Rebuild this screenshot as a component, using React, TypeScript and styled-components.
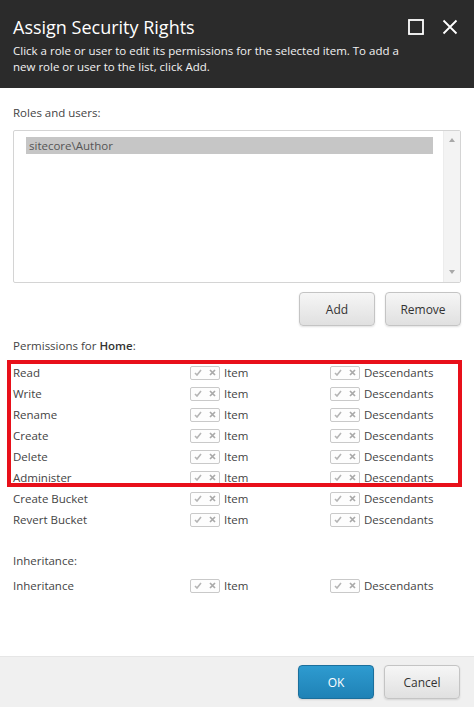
import React from 'react';
import styled, { createGlobalStyle } from 'styled-components';

const GlobalStyle = createGlobalStyle`
  html, body {
    margin: 0;
    padding: 0;
    background: #fff;
  }
  body {
    font-family: "Open Sans", "Noto Sans", sans-serif;
    color: #333;
  }
`;

const Dialog = styled.div`
  display: flex;
  flex-direction: column;
  width: 474px;
  height: 707px;
  overflow: hidden;
`;

const Header = styled.header`
  background: #2b2b2b;
  color: #fff;
  padding: 14px 13px;
  height: 88px;
  box-sizing: border-box;
`;

const TitleRow = styled.div`
  display: flex;
  align-items: center;
  justify-content: space-between;
`;

const Title = styled.h1`
  margin: 0;
  font-size: 18px;
  font-weight: 400;
  line-height: 26px;
`;

const WindowButtons = styled.div`
  display: flex;
  gap: 18px;
  padding-right: 3px;
`;

const Description = styled.p`
  margin: 3px 0 0;
  max-width: 410px;
  font-size: 11.5px;
  line-height: 16px;
  color: #f2f2f2;
`;

const Body = styled.main`
  flex: 1;
  padding: 16px 13px 0;
`;

const SectionLabel = styled.div<{ $top?: number; $gap?: number }>`
  font-size: 11.5px;
  line-height: 18px;
  color: #444;
  margin-top: ${({ $top }) => $top ?? 0}px;
  margin-bottom: ${({ $gap }) => $gap ?? 8}px;
  b {
    font-weight: 600;
    color: #333;
  }
`;

const ListBox = styled.div`
  display: flex;
  height: 153px;
  border: 1px solid #d4d4d4;
  border-radius: 2px;
  box-sizing: border-box;
`;

const ListItems = styled.div`
  flex: 1;
  padding: 6px 10px 0 12px;
`;

const ListItem = styled.div<{ $selected?: boolean }>`
  background: ${({ $selected }) => ($selected ? '#c6c6c6' : 'transparent')};
  font-size: 11.5px;
  line-height: 17px;
  padding: 0 3px;
  color: #555;
`;

const Scrollbar = styled.div`
  width: 17px;
  background: #f3f3f3;
  border-left: 1px solid #ececec;
  display: flex;
  flex-direction: column;
  justify-content: space-between;
  align-items: center;
  padding: 7px 0 8px;
  box-sizing: border-box;
`;

const Arrow = styled.div<{ $down?: boolean }>`
  width: 0;
  height: 0;
  border-left: 3px solid transparent;
  border-right: 3px solid transparent;
  ${({ $down }) =>
    $down ? 'border-top: 4px solid #a8a8a8;' : 'border-bottom: 4px solid #a8a8a8;'}
`;

const ButtonRow = styled.div`
  display: flex;
  justify-content: flex-end;
  gap: 10px;
  margin-top: 9px;
`;

const Button = styled.button<{ $primary?: boolean }>`
  width: 76px;
  height: 34px;
  border-radius: 4px;
  font-family: inherit;
  font-size: 12px;
  cursor: pointer;
  border: 1px solid ${({ $primary }) => ($primary ? '#1b6f9c' : '#c4c4c4')};
  background: ${({ $primary }) =>
    $primary
      ? 'linear-gradient(#2e9bd0, #1f82b6)'
      : 'linear-gradient(#f6f6f6, #e0e0e0)'};
  color: ${({ $primary }) => ($primary ? '#fff' : '#333')};
  box-shadow: 0 1px 2px rgba(0, 0, 0, 0.12);
`;

const PermissionList = styled.div`
  position: relative;
`;

const Highlight = styled.div<{ $rows: number }>`
  position: absolute;
  top: -2px;
  left: -6px;
  right: -1px;
  height: ${({ $rows }) => $rows * 21 + 1}px;
  border: 4px solid #e8101a;
  box-sizing: border-box;
  pointer-events: none;
`;

const Row = styled.div`
  display: grid;
  grid-template-columns: 177px 140px 1fr;
  align-items: center;
  height: 21px;
  font-size: 11.5px;
  color: #444;
`;

const Cell = styled.div`
  display: flex;
  align-items: center;
  gap: 4px;
`;

const ToggleBox = styled.span`
  display: inline-flex;
  align-items: center;
  justify-content: space-around;
  width: 30px;
  height: 14px;
  border: 1px solid #c9c9c9;
  border-radius: 2px;
  box-sizing: border-box;
  background: #fdfdfd;
`;

const Footer = styled.footer`
  background: #f0f0f0;
  border-top: 1px solid #e6e6e6;
  height: 51px;
  box-sizing: border-box;
  display: flex;
  justify-content: flex-end;
  align-items: center;
  gap: 10px;
  padding: 0 14px 0 0;
`;

const Toggle = () => (
  <ToggleBox>
    <svg width="8" height="7" viewBox="0 0 8 7">
      <path d="M1 4 L3 6 L7 1" stroke="#b5b5b5" strokeWidth="1.6" fill="none" />
    </svg>
    <svg width="7" height="7" viewBox="0 0 7 7">
      <path d="M1 1 L6 6 M6 1 L1 6" stroke="#a9a9a9" strokeWidth="1.7" />
    </svg>
  </ToggleBox>
);

const PermissionRow = ({ name }: { name: string }) => (
  <Row>
    <span>{name}</span>
    <Cell>
      <Toggle />
      Item
    </Cell>
    <Cell>
      <Toggle />
      Descendants
    </Cell>
  </Row>
);

const highlighted = ['Read', 'Write', 'Rename', 'Create', 'Delete', 'Administer'];
const others = ['Create Bucket', 'Revert Bucket'];

const App: React.FC = () => (
  <>
    <GlobalStyle />
    <Dialog>
      <Header>
        <TitleRow>
          <Title>Assign Security Rights</Title>
          <WindowButtons>
            <svg width="16" height="16" viewBox="0 0 16 16">
              <rect x="1" y="1" width="14" height="14" stroke="#fff" strokeWidth="1.8" fill="none" />
            </svg>
            <svg width="16" height="16" viewBox="0 0 16 16">
              <path d="M1.5 1.5 L14.5 14.5 M14.5 1.5 L1.5 14.5" stroke="#fff" strokeWidth="1.8" />
            </svg>
          </WindowButtons>
        </TitleRow>
        <Description>
          Click a role or user to edit its permissions for the selected item. To add a new role
          or user to the list, click Add.
        </Description>
      </Header>
      <Body>
        <SectionLabel>Roles and users:</SectionLabel>
        <ListBox>
          <ListItems>
            <ListItem $selected>sitecore\Author</ListItem>
          </ListItems>
          <Scrollbar>
            <Arrow />
            <Arrow $down />
          </Scrollbar>
        </ListBox>
        <ButtonRow>
          <Button>Add</Button>
          <Button>Remove</Button>
        </ButtonRow>
        <SectionLabel $top={11} $gap={7}>
          Permissions for <b>Home</b>:
        </SectionLabel>
        <PermissionList>
          <Highlight $rows={highlighted.length} />
          {highlighted.map(n => (
            <PermissionRow key={n} name={n} />
          ))}
          {others.map(n => (
            <PermissionRow key={n} name={n} />
          ))}
        </PermissionList>
        <SectionLabel $top={22} $gap={5}>
          Inheritance:
        </SectionLabel>
        <PermissionRow name="Inheritance" />
      </Body>
      <Footer>
        <Button $primary>OK</Button>
        <Button>Cancel</Button>
      </Footer>
    </Dialog>
  </>
);

export default App;
